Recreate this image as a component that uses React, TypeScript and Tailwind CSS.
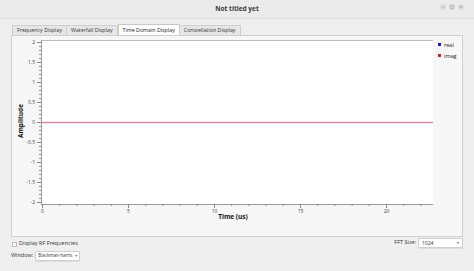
import React from "react";

const F = '"Open Sans", "Noto Sans", "DejaVu Sans", sans-serif';

function Plot() {
  const ox = 11, oy = 35;
  const X = (t: number) => 41 + t * 17.2 - ox;
  const Y = (v: number) => 121 - v * 40 - oy;
  const yMajor = [2, 1.5, 1, 0.5, 0, -0.5, -1, -1.5, -2];
  const yMinor: number[] = [];
  for (let i = -20; i <= 20; i++) yMinor.push(i / 10);
  const xMinor: number[] = [];
  for (let i = 0; i <= 22; i++) xMinor.push(i);
  const axisY = 203 - oy;
  const axisX = 40 - ox;
  return (
    <svg width={451} height={201} className="block" style={{ fontFamily: F }}>
      <rect x={axisX} y={39 - oy} width={432 - 40} height={axisY - (39 - oy)} fill="#ffffff" />
      <line x1={axisX} y1={39 - oy + 0.5} x2={432 - ox} y2={39 - oy + 0.5} stroke="#bdbdbd" strokeWidth={1} />
      <line x1={axisX + 0.5} y1={39 - oy} x2={axisX + 0.5} y2={axisY} stroke="#9a9a9a" strokeWidth={1} />
      {yMinor.map((v) => (
        <line key={"ym" + v} x1={axisX - 2} y1={Y(v) + 0.5} x2={axisX} y2={Y(v) + 0.5} stroke="#9a9a9a" strokeWidth={1} />
      ))}
      {yMajor.map((v) => (
        <g key={"yM" + v}>
          <line x1={axisX - 4} y1={Y(v) + 0.5} x2={axisX} y2={Y(v) + 0.5} stroke="#8a8a8a" strokeWidth={1} />
          <text x={axisX - 6} y={Y(v) + 2} fontSize={5} textAnchor="end" fill="#444">
            {v}
          </text>
        </g>
      ))}
      <line x1={axisX} y1={axisY + 0.5} x2={432 - ox} y2={axisY + 0.5} stroke="#9a9a9a" strokeWidth={1} />
      {xMinor.map((t) => (
        <line key={"xm" + t} x1={X(t) + 0.5} y1={axisY} x2={X(t) + 0.5} y2={axisY + (t % 5 === 0 ? 4 : 2)} stroke="#8a8a8a" strokeWidth={1} />
      ))}
      {[0, 5, 10, 15, 20].map((t) => (
        <text key={"xl" + t} x={X(t) + 0.5} y={axisY + 9} fontSize={5} textAnchor="middle" fill="#444">
          {t}
        </text>
      ))}
      <text x={232 - ox} y={218 - oy} fontSize={6.5} fontWeight={700} textAnchor="middle" fill="#111">
        Time (us)
      </text>
      <text
        x={0}
        y={0}
        fontSize={6.5}
        fontWeight={700}
        textAnchor="middle"
        fill="#111"
        transform={`translate(${22 - ox} ${120 - oy}) rotate(-90)`}
      >
        Amplitude
      </text>
      <line x1={axisX + 1} y1={Y(0) + 0.5} x2={432 - ox} y2={Y(0) + 0.5} stroke="#e08aa8" strokeWidth={1.3} />
      <rect x={437 - ox} y={42 - oy} width={3} height={3} fill="#1a1acc" />
      <text x={443 - ox} y={45.5 - oy} fontSize={5.5} fill="#222">real</text>
      <rect x={437 - ox} y={53 - oy} width={3} height={3} fill="#cc1a2a" />
      <text x={443 - ox} y={56.5 - oy} fontSize={5.5} fill="#222">imag</text>
    </svg>
  );
}

export default function App() {
  const tabs = ["Frequency Display", "Waterfall Display", "Time Domain Display", "Constellation Display"];
  return (
    <div className="w-[474px] h-[271px] bg-[#efefef] flex flex-col overflow-hidden text-[#333]" style={{ fontFamily: F }}>
      <div className="h-[19px] bg-[#ebebeb] border-b border-[#dcdcdc] flex items-center relative">
        <div className="flex-1 text-center text-[6.5px] font-bold text-[#3a3a3a] leading-none">Not titled yet</div>
        <div className="absolute right-[10px] top-[4px] flex gap-[3px]">
          {["–", "□", "×"].map((g) => (
            <div key={g} className="w-[6px] h-[6px] rounded-full bg-[#dadada] flex items-center justify-center text-[4px] leading-none text-[#555]">
              {g}
            </div>
          ))}
        </div>
      </div>
      <div className="px-[11px] pt-[5px] flex flex-col">
        <div className="flex pl-[1px] h-[11px] items-end">
          {tabs.map((t, i) => (
            <div
              key={t}
              className={
                i === 2
                  ? "h-[11px] px-[4px] bg-white border border-b-0 border-[#c8c8c8] text-[5.3px] leading-[10px] text-[#222]"
                  : "h-[10px] px-[4px] bg-[#e6e6e6] border border-b-0 border-[#cfcfcf] text-[5.3px] leading-[9px] text-[#333] -ml-px first:ml-0"
              }
            >
              {t}
            </div>
          ))}
        </div>
        <div className="h-[202px] bg-[#f7f7f7] border border-[#d0d0d0]">
          <Plot />
        </div>
        <div className="flex justify-between h-[12px] items-center">
          <div className="flex items-center gap-[2px] pl-[1px] pt-[2px]">
            <div className="w-[5px] h-[5px] border border-[#bbb] bg-white" />
            <span className="text-[5.5px] leading-none text-[#333]">Display RF Frequencies</span>
          </div>
          <div className="flex items-center gap-[2px]">
            <span className="text-[5.5px] leading-none text-[#333]">FFT Size:</span>
            <div className="w-[45px] h-[10px] bg-white border border-[#cfcfcf] rounded-[1px] flex items-center justify-between px-[3px] shadow-[0_1px_0_#ddd]">
              <span className="text-[5px] leading-none">1024</span>
              <span className="text-[4px] leading-none text-[#666]">▾</span>
            </div>
          </div>
        </div>
        <div className="flex items-center gap-[2px] h-[11px] mt-[1px]">
          <span className="text-[5.5px] leading-none text-[#333]">Window:</span>
          <div className="w-[45px] h-[10px] bg-white border border-[#cfcfcf] rounded-[1px] flex items-center justify-between px-[2px] shadow-[0_1px_0_#ddd]">
            <span className="text-[4.5px] leading-none">Blackman-harris</span>
            <span className="text-[4px] leading-none text-[#666]">▾</span>
          </div>
        </div>
      </div>
    </div>
  );
}
